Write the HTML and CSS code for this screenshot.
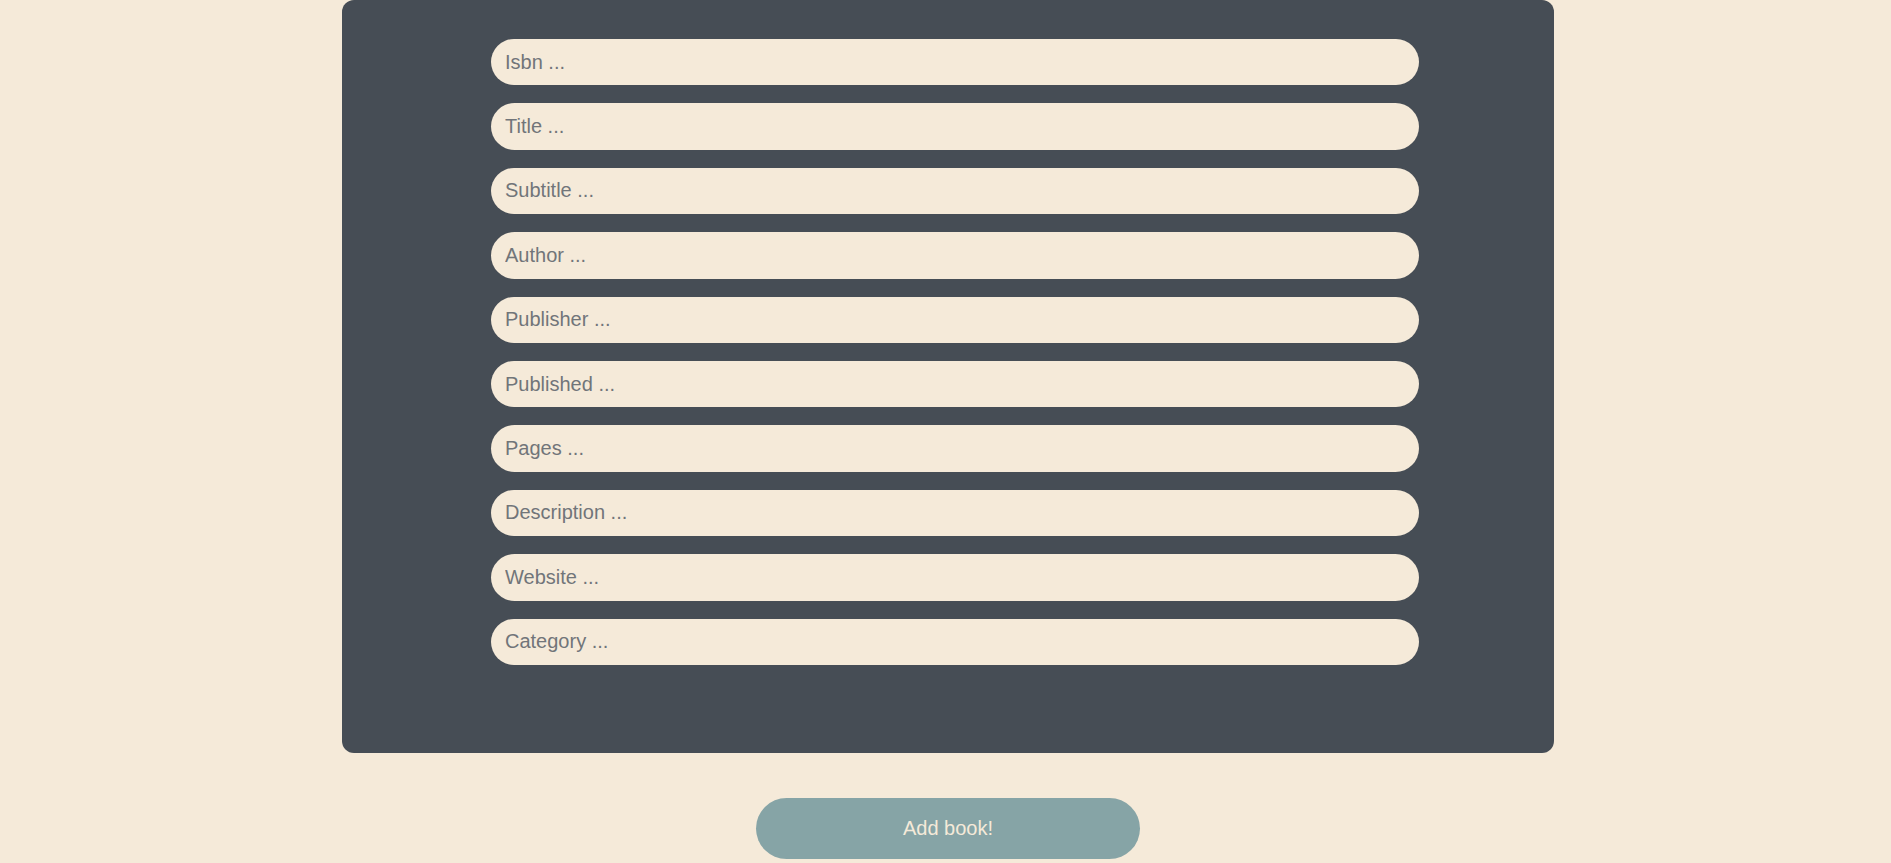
FILE: index.html
```html
<!DOCTYPE html>
<html lang="en">
<head>
<meta charset="utf-8">
<title>Add book</title>
<link rel="stylesheet" href="styles.css">
</head>
<body>
<main class="page">
  <form class="book-form">
    <div class="fields">
      <input class="field" type="text" placeholder="Isbn ...">
      <input class="field" type="text" placeholder="Title ...">
      <input class="field" type="text" placeholder="Subtitle ...">
      <input class="field" type="text" placeholder="Author ...">
      <input class="field" type="text" placeholder="Publisher ...">
      <input class="field" type="text" placeholder="Published ...">
      <input class="field" type="text" placeholder="Pages ...">
      <input class="field" type="text" placeholder="Description ...">
      <input class="field" type="text" placeholder="Website ...">
      <input class="field" type="text" placeholder="Category ...">
    </div>
  </form>
  <div class="actions">
    <button class="add-btn" type="button">Add book!</button>
  </div>
</main>
</body>
</html>
```
FILE: styles.css
```css
html, body {
  margin: 0;
  padding: 0;
  background: #f5ead9;
  font-family: "Liberation Sans", Arial, sans-serif;
}

body {
  padding-left: 5px;
  height: 863px;
  overflow: hidden;
}

.page {
  width: 1212px;
  margin: 0 auto;
  display: flex;
  flex-direction: column;
}

.book-form {
  background: #464d55;
  border-radius: 12px;
  padding: 39px 135px 0 149px;
  height: 753px;
  box-sizing: border-box;
}

.fields {
  display: flex;
  flex-direction: column;
  gap: 18px;
}

.field {
  display: block;
  box-sizing: border-box;
  width: 928px;
  height: 46.4px;
  border: none;
  outline: none;
  border-radius: 24px;
  background: #f5ead9;
  padding: 0 14px;
  font-family: "Liberation Sans", Arial, sans-serif;
  font-size: 20px;
  color: #3b3f44;
}

.field::placeholder {
  color: #717579;
  opacity: 1;
}

.actions {
  display: flex;
  justify-content: center;
  padding-top: 45px;
}

.add-btn {
  width: 384px;
  height: 61px;
  border: none;
  border-radius: 31px;
  background: #86a4a6;
  color: #f5ead9;
  font-family: "Liberation Sans", Arial, sans-serif;
  font-size: 20px;
  cursor: pointer;
}
```
